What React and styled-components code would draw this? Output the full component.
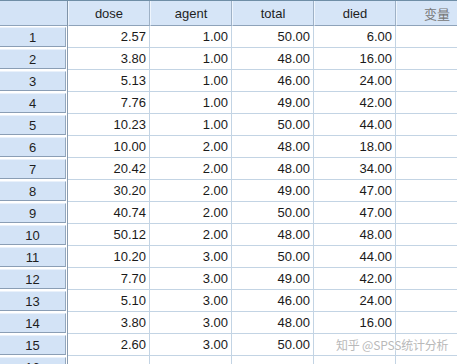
import React from 'react';
import styled, { createGlobalStyle } from 'styled-components';

const GlobalStyle = createGlobalStyle`
  html, body {
    margin: 0;
    padding: 0;
    background: #ffffff;
  }
  body {
    font-family: "Liberation Sans", Arial, "Noto Sans CJK SC", sans-serif;
  }
`;

const Sheet = styled.div`
  position: relative;
  width: 457px;
  height: 364px;
  overflow: hidden;
  background: #fff;
`;

const Grid = styled.div`
  display: grid;
  grid-template-columns: 68px repeat(5, 82px);
  grid-template-rows: 25px;
  grid-auto-rows: 22px;
  width: max-content;
  border-top: 1px solid #6f8ea6;
`;

const Corner = styled.div`
  background: #d3e3f6;
  border-right: 1px solid #7f93a8;
  border-bottom: 1px solid #8ea3ba;
  box-sizing: border-box;
`;

const HeadCell = styled.div`
  box-sizing: border-box;
  display: flex;
  align-items: center;
  justify-content: center;
  background: #d6e5f7;
  border-left: 1px solid #eef5fd;
  border-right: 1px solid #9eb1c6;
  border-bottom: 1px solid #8ea3ba;
  font-size: 13px;
  color: ${p => (p.$muted ? '#777' : '#1e1e1e')};
`;

const RowHead = styled.div`
  box-sizing: border-box;
  padding: 1px 1px 1px 0;
  background: #fff;
  border-right: 1px solid #8a9cb0;
`;

const RowHeadBox = styled.div`
  height: 100%;
  box-sizing: border-box;
  display: flex;
  align-items: center;
  justify-content: center;
  background: #d3e3f6;
  border-top: 1px solid #e9f1fb;
  border-right: 1px solid #93a7bd;
  border-bottom: 1px solid #8a9eb5;
  font-size: 13px;
  color: #1e1e1e;
`;

const Cell = styled.div`
  box-sizing: border-box;
  display: flex;
  align-items: center;
  justify-content: flex-end;
  padding-right: 3px;
  background: #fff;
  border-right: 1px solid #c3d4e4;
  border-bottom: 1px solid #c3d4e4;
  font-size: 13px;
  color: #1a1a1a;
`;

const Watermark = styled.div`
  position: absolute;
  left: 336px;
  top: 336px;
  font-size: 12px;
  color: #b9b9b9;
  letter-spacing: -0.2px;
  text-shadow: 0 0 2px #fff, 0 0 2px #fff;
  white-space: nowrap;
  font-family: "Noto Sans CJK SC", "Liberation Sans", sans-serif;
`;

const rows = [
  [2.57, 1, 50, 6],
  [3.8, 1, 48, 16],
  [5.13, 1, 46, 24],
  [7.76, 1, 49, 42],
  [10.23, 1, 50, 44],
  [10.0, 2, 48, 18],
  [20.42, 2, 48, 34],
  [30.2, 2, 49, 47],
  [40.74, 2, 50, 47],
  [50.12, 2, 48, 48],
  [10.2, 3, 50, 44],
  [7.7, 3, 49, 42],
  [5.1, 3, 46, 24],
  [3.8, 3, 48, 16],
  [2.6, 3, 50, null],
  [null, null, null, null],
];

const columns = ['dose', 'agent', 'total', 'died'];

export default function App() {
  return (
    <Sheet>
      <GlobalStyle />
      <Grid>
        <Corner />
        {columns.map(c => (
          <HeadCell key={c}>{c}</HeadCell>
        ))}
        <HeadCell $muted>变量</HeadCell>

        {rows.map((r, i) => (
          <React.Fragment key={i}>
            <RowHead>
              <RowHeadBox>{i + 1}</RowHeadBox>
            </RowHead>
            {r.map((v, j) => (
              <Cell key={j}>{v === null ? '' : v.toFixed(2)}</Cell>
            ))}
            <Cell />
          </React.Fragment>
        ))}
      </Grid>
      <Watermark>知乎 @SPSS统计分析</Watermark>
    </Sheet>
  );
}
